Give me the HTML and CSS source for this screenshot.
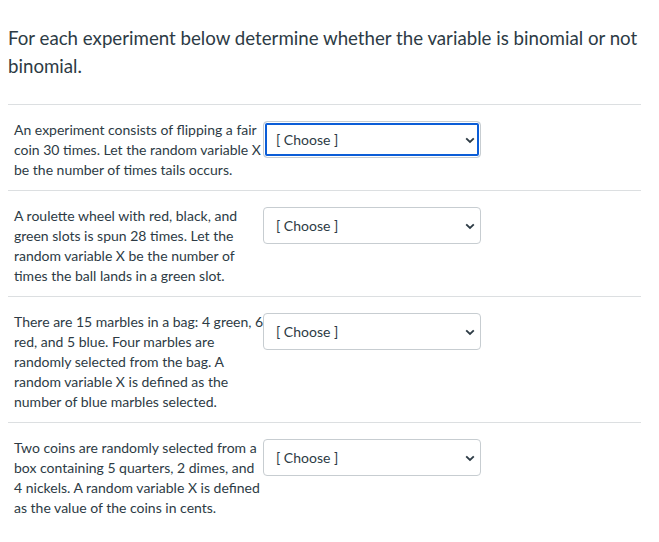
FILE: index.html
```html
<!DOCTYPE html>
<html>
<head>
<meta charset="utf-8">
<link rel="stylesheet" href="styles.css">
</head>
<body>
<div class="quiz">
  <p class="intro">For each experiment below determine whether the variable is binomial or not binomial.</p>
  <div class="row">
    <div class="q">An experiment consists of flipping a fair coin 30 times. Let the random variable X be the number of times tails occurs.</div>
    <div class="sel focused"><span>[ Choose ]</span><svg class="chev" width="10" height="7" viewBox="0 0 10 7"><path d="M1.2 1.3 L5 5 L8.8 1.3" fill="none" stroke="#2d3b45" stroke-width="1.8"/></svg></div>
  </div>
  <div class="row">
    <div class="q">A roulette wheel with red, black, and green slots is spun 28 times. Let the random variable X be the number of times the ball lands in a green slot.</div>
    <div class="sel"><span>[ Choose ]</span><svg class="chev" width="10" height="7" viewBox="0 0 10 7"><path d="M1.2 1.3 L5 5 L8.8 1.3" fill="none" stroke="#2d3b45" stroke-width="1.8"/></svg></div>
  </div>
  <div class="row">
    <div class="q">There are 15 marbles in a bag: 4 green, 6 red, and 5 blue. Four marbles are randomly selected from the bag. A random variable X is defined as the number of blue marbles selected.</div>
    <div class="sel"><span>[ Choose ]</span><svg class="chev" width="10" height="7" viewBox="0 0 10 7"><path d="M1.2 1.3 L5 5 L8.8 1.3" fill="none" stroke="#2d3b45" stroke-width="1.8"/></svg></div>
  </div>
  <div class="row last">
    <div class="q">Two coins are randomly selected from a box containing 5 quarters, 2 dimes, and 4 nickels. A random variable X is defined as the value of the coins in cents.</div>
    <div class="sel"><span>[ Choose ]</span><svg class="chev" width="10" height="7" viewBox="0 0 10 7"><path d="M1.2 1.3 L5 5 L8.8 1.3" fill="none" stroke="#2d3b45" stroke-width="1.8"/></svg></div>
  </div>
</div>
</body>
</html>
```

FILE: styles.css
```css
html, body {
  margin: 0;
  padding: 0;
  background: #fff;
}
body {
  padding: 8px;
  font-family: Lato, "Liberation Sans", sans-serif;
  color: #2d3b45;
}
.quiz {
  width: 633px;
}
.intro {
  margin: 16px 0 0 0;
  font-size: 18.7px;
  line-height: 28px;
  padding-bottom: 24px;
  border-bottom: 1px solid #dcdfe1;
}
.row {
  display: flex;
  align-items: flex-start;
  padding: 15px 6px 10px 6px;
  border-bottom: 1px solid #dcdfe1;
}
.row.last {
  border-bottom: none;
}
.q {
  width: 250.5px;
  margin-right: -1.5px;
  font-size: 14px;
  line-height: 20px;
}
.sel {
  position: relative;
  box-sizing: border-box;
  width: 218px;
  height: 37px;
  margin-top: 1px;
  border: 1px solid #c7cdd1;
  border-radius: 4px;
  font-size: 14px;
  line-height: 35px;
  padding-left: 12px;
  color: #2d3b45;
}
.sel.focused {
  box-shadow: inset 0 0 0 1px #fff, inset 0 0 0 3px #0b5dd7;
}
.chev {
  position: absolute;
  right: 5px;
  top: 15px;
}
```
